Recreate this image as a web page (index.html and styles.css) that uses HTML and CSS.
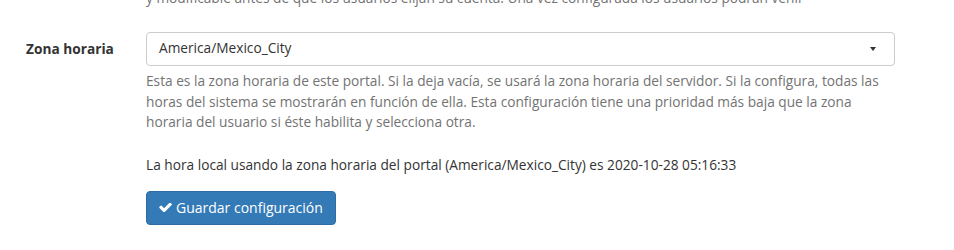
FILE: index.html
```html
<!DOCTYPE html>
<html lang="es">
<head>
<meta charset="utf-8">
<title>Zona horaria</title>
<link rel="stylesheet" href="styles.css">
</head>
<body>
<div class="page">
  <div class="row">
    <div class="label-col"></div>
    <div class="field">
      <p class="help-block top-cut">y modificable antes de que los usuarios elijan su cuenta. Una vez configurada los usuarios podrán venir</p>
    </div>
  </div>
  <div class="row">
    <label class="label-col control-label">Zona horaria</label>
    <div class="field">
      <div class="select">
        <span class="select-value">America/Mexico_City</span>
        <span class="caret"></span>
      </div>
      <p class="help-block">Esta es la zona horaria de este portal. Si la deja vacía, se usará la zona horaria del servidor. Si la configura, todas las horas del sistema se mostrarán en función de ella. Esta configuración tiene una prioridad más baja que la zona horaria del usuario si éste habilita y selecciona otra.</p>
    </div>
  </div>
  <div class="row">
    <div class="label-col"></div>
    <div class="field">
      <p class="static">La hora local usando la zona horaria del portal (America/Mexico_City) es 2020-10-28 05:16:33</p>
    </div>
  </div>
  <div class="row">
    <div class="label-col"></div>
    <div class="field">
      <button class="btn" type="button"><svg class="icon" viewBox="90 440 1590 1000" aria-hidden="true"><path fill="#fff" d="M1671 566q0 40-28 68l-724 724-136 136q-28 28-68 28t-68-28l-136-136-362-362q-28-28-28-68t28-68l136-136q28-28 68-28t68 28l294 295 656-657q28-28 68-28t68 28l136 136q28 28 28 68z"/></svg>Guardar configuración</button>
    </div>
  </div>
</div>
</body>
</html>
```

FILE: styles.css
```css
html, body {
  margin: 0;
  padding: 0;
  background: #fff;
}
body {
  font-family: "Open Sans", "DejaVu Sans", sans-serif;
  font-size: 13.7px;
  line-height: 20.8px;
  color: #333;
}
.page {
  padding: 0 59px 0 26px;
  overflow: hidden;
  height: 250px;
}
.row {
  display: flex;
  align-items: flex-start;
}
.label-col {
  width: 120px;
  flex: 0 0 120px;
}
.control-label {
  font-weight: 700;
  padding-top: 7px;
}
.field {
  flex: 1;
  min-width: 0;
}
.help-block {
  color: #737373;
  margin: 5px 0 0;
}
.top-cut {
  margin: -12px 0 23px;
  white-space: nowrap;
}
.select {
  box-sizing: border-box;
  height: 34px;
  border: 1px solid #ccc;
  border-radius: 4px;
  padding: 6px 12px;
  display: flex;
  align-items: center;
  justify-content: space-between;
}
.select-value {
  line-height: 20.8px;
}
.caret {
  width: 0;
  height: 0;
  border-style: solid;
  border-width: 4px 3.5px 0 3.5px;
  border-color: #333 transparent transparent transparent;
  margin-right: 6px;
}
.static {
  margin: 22px 0 0;
}
.btn {
  margin-top: 15px;
  box-sizing: border-box;
  height: 34px;
  padding: 6px 12px;
  background: #337ab7;
  border: 1px solid #2e6da4;
  border-radius: 4px;
  color: #fff;
  font-family: "Open Sans", "DejaVu Sans", sans-serif;
  font-size: 14px;
  line-height: 20px;
  display: inline-flex;
  align-items: center;
}
.icon {
  width: 13px;
  height: 9px;
  margin-right: 4px;
}
```
